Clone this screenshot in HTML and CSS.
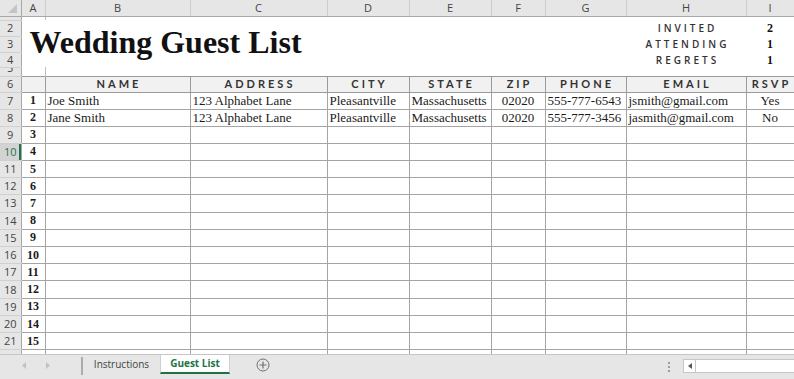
FILE: index.html
```html
<!DOCTYPE html>
<html>

<head>
    <title>Wedding Guest List</title>

    <link rel="stylesheet" href="styles.css">
</head>

<body>

    <main class="sheet">

        <div class="grid-area">
            <table class="grid">
                <colgroup>
                    <col class="col-rh">
                    <col class="col-a">
                    <col class="col-b">
                    <col class="col-c">
                    <col class="col-d">
                    <col class="col-e">
                    <col class="col-f">
                    <col class="col-g">
                    <col class="col-h">
                    <col class="col-i">
                </colgroup>

                <tr class="row-colhead">
                    <th class="corner">
                        <svg width="20" height="15" viewBox="0 0 20 15"><polygon points="17,4 17,13 8,13" fill="#c4c4c4"/></svg>
                    </th>
                    <th>A</th>
                    <th>B</th>
                    <th>C</th>
                    <th>D</th>
                    <th>E</th>
                    <th>F</th>
                    <th>G</th>
                    <th>H</th>
                    <th>I</th>
                </tr>

                <!-- title block -->
                <tr class="row-1">
                    <th class="rh"><div class="clip clip-1">1</div></th>
                    <td class="edge-a"></td>
                    <td colspan="8"></td>
                </tr>
                <tr class="row-2">
                    <th class="rh">2</th>
                    <td class="title" colspan="7" rowspan="3">Wedding Guest List</td>
                    <td class="stat-label">INVITED</td>
                    <td class="stat-value">2</td>
                </tr>
                <tr class="row-3">
                    <th class="rh">3</th>
                    <td class="stat-label">ATTENDING</td>
                    <td class="stat-value">1</td>
                </tr>
                <tr class="row-4">
                    <th class="rh">4</th>
                    <td class="stat-label">REGRETS</td>
                    <td class="stat-value">1</td>
                </tr>
                <tr class="row-5">
                    <th class="rh"><div class="clip clip-5">5</div></th>
                    <td class="edge-a"></td>
                    <td colspan="8"></td>
                </tr>

                <!-- guest table -->
                <tr class="row-head">
                    <th class="rh">6</th>
                    <td></td>
                    <td>NAME</td>
                    <td>ADDRESS</td>
                    <td>CITY</td>
                    <td>STATE</td>
                    <td>ZIP</td>
                    <td>PHONE</td>
                    <td>EMAIL</td>
                    <td>RSVP</td>
                </tr>
                <tr class="row-data">
                    <th class="rh">7</th>
                    <td class="num">1</td>
                    <td>Joe Smith</td>
                    <td>123 Alphabet Lane</td>
                    <td>Pleasantville</td>
                    <td>Massachusetts</td>
                    <td class="center">02020</td>
                    <td>555-777-6543</td>
                    <td>jsmith@gmail.com</td>
                    <td class="center">Yes</td>
                </tr>
                <tr class="row-data">
                    <th class="rh">8</th>
                    <td class="num">2</td>
                    <td>Jane Smith</td>
                    <td>123 Alphabet Lane</td>
                    <td>Pleasantville</td>
                    <td>Massachusetts</td>
                    <td class="center">02020</td>
                    <td>555-777-3456</td>
                    <td>jasmith@gmail.com</td>
                    <td class="center">No</td>
                </tr>
                <tr class="row-empty">
                    <th class="rh">9</th>
                    <td class="num">3</td>
                    <td></td><td></td><td></td><td></td><td></td><td></td><td></td><td></td>
                </tr>
                <tr class="row-empty">
                    <th class="rh rh-selected">10</th>
                    <td class="num">4</td>
                    <td></td><td></td><td></td><td></td><td></td><td></td><td></td><td></td>
                </tr>
                <tr class="row-empty">
                    <th class="rh">11</th>
                    <td class="num">5</td>
                    <td></td><td></td><td></td><td></td><td></td><td></td><td></td><td></td>
                </tr>
                <tr class="row-empty">
                    <th class="rh">12</th>
                    <td class="num">6</td>
                    <td></td><td></td><td></td><td></td><td></td><td></td><td></td><td></td>
                </tr>
                <tr class="row-empty">
                    <th class="rh">13</th>
                    <td class="num">7</td>
                    <td></td><td></td><td></td><td></td><td></td><td></td><td></td><td></td>
                </tr>
                <tr class="row-empty">
                    <th class="rh">14</th>
                    <td class="num">8</td>
                    <td></td><td></td><td></td><td></td><td></td><td></td><td></td><td></td>
                </tr>
                <tr class="row-empty">
                    <th class="rh">15</th>
                    <td class="num">9</td>
                    <td></td><td></td><td></td><td></td><td></td><td></td><td></td><td></td>
                </tr>
                <tr class="row-empty">
                    <th class="rh">16</th>
                    <td class="num">10</td>
                    <td></td><td></td><td></td><td></td><td></td><td></td><td></td><td></td>
                </tr>
                <tr class="row-empty">
                    <th class="rh">17</th>
                    <td class="num">11</td>
                    <td></td><td></td><td></td><td></td><td></td><td></td><td></td><td></td>
                </tr>
                <tr class="row-empty">
                    <th class="rh">18</th>
                    <td class="num">12</td>
                    <td></td><td></td><td></td><td></td><td></td><td></td><td></td><td></td>
                </tr>
                <tr class="row-empty">
                    <th class="rh">19</th>
                    <td class="num">13</td>
                    <td></td><td></td><td></td><td></td><td></td><td></td><td></td><td></td>
                </tr>
                <tr class="row-empty">
                    <th class="rh">20</th>
                    <td class="num">14</td>
                    <td></td><td></td><td></td><td></td><td></td><td></td><td></td><td></td>
                </tr>
                <tr class="row-empty">
                    <th class="rh">21</th>
                    <td class="num">15</td>
                    <td></td><td></td><td></td><td></td><td></td><td></td><td></td><td></td>
                </tr>
                <tr class="row-empty">
                    <th class="rh">22</th>
                    <td class="num">16</td>
                    <td></td><td></td><td></td><td></td><td></td><td></td><td></td><td></td>
                </tr>
            </table>
        </div>

        <footer class="tabbar">
            <div class="tab-nav">
                <svg width="5" height="7" viewBox="0 0 5 7"><polygon points="4,0 4,7 0,3.5" fill="#c2c2c2"/></svg>
                <svg width="5" height="7" viewBox="0 0 5 7"><polygon points="1,0 1,7 5,3.5" fill="#c2c2c2"/></svg>
            </div>
            <div class="tab-split"></div>
            <div class="tab">Instructions</div>
            <div class="tab tab-active">Guest List</div>
            <div class="tab-add">
                <svg width="14" height="14" viewBox="0 0 14 14">
                    <circle cx="7" cy="7" r="6" fill="none" stroke="#707070" stroke-width="1"/>
                    <path d="M7 3.5v7M3.5 7h7" stroke="#707070" stroke-width="1.2"/>
                </svg>
            </div>

            <div class="tab-right">
                <div class="grip">
                    <span></span><span></span><span></span>
                </div>
                <div class="hscroll">
                    <div class="hscroll-btn">
                        <svg width="4" height="6" viewBox="0 0 4 6"><polygon points="4,0 4,6 0,3" fill="#555"/></svg>
                    </div>
                </div>
            </div>
        </footer>

    </main>

</body>

</html>
```

FILE: styles.css
```css
* {
    margin: 0;
    padding: 0;
    box-sizing: border-box;
}

html,
body {
    width: 100%;
    height: 100%;
}

body {
    overflow: hidden;
    background-color: #fff;
    font-family: "Open Sans", "Noto Sans", sans-serif;
}

.sheet {
    display: flex;
    flex-direction: column;
    width: 794px;
    height: 379px;
}

.grid-area {
    height: 354px;
    overflow: hidden;
}

/* the grid */

.grid {
    width: 794px;
    table-layout: fixed;
    border-collapse: collapse;
}

.col-rh { width: 21px; }
.col-a { width: 24px; }
.col-b { width: 145px; }
.col-c { width: 137px; }
.col-d { width: 82px; }
.col-e { width: 82px; }
.col-f { width: 54px; }
.col-g { width: 81px; }
.col-h { width: 120px; }
.col-i { width: 48px; }

th,
td {
    padding: 0;
    white-space: nowrap;
    overflow: hidden;
}

.row-colhead {
    height: 16px;
}

.row-colhead th {
    background-color: #e6e6e6;
    border-right: 1px solid #cdcdcd;
    border-bottom: 1px solid #a8a8a8;
    color: #444;
    font-size: 11px;
    font-weight: normal;
    line-height: 15px;
    text-align: center;
}

.row-colhead .corner {
    border-right: 1px solid #a8a8a8;
    line-height: 0;
}

.rh {
    background-color: #e6e6e6;
    border-right: 1px solid #a8a8a8;
    border-bottom: 1px solid #d0d0d0;
    color: #444;
    font-size: 11px;
    font-weight: normal;
    line-height: 14px;
    text-align: center;
}

.rh-selected {
    background-color: #d3d3d3;
    color: #217346;
    box-shadow: inset -2px 0 0 #217346;
}

.clip {
    display: flex;
    align-items: flex-end;
    justify-content: center;
    overflow: hidden;
}

.clip-1 {
    height: 3px;
    line-height: 16px;
}

.clip-5 {
    height: 8px;
    line-height: 16px;
}

.row-1 { height: 4px; }
.row-2 { height: 16px; }
.row-3 { height: 16px; }
.row-4 { height: 14px; }
.row-5 { height: 9px; }

.edge-a {
    border-right: 1px solid #bdbdbd;
}

/* title block */

.title {
    vertical-align: top;
    padding: 6px 0 0 8px;
    font-family: "Liberation Serif", serif;
    font-size: 32px;
    font-weight: bold;
    line-height: 33px;
    color: #111;
}

.stat-label {
    text-align: center;
    padding-left: 3px;
    font-family: "Open Sans", sans-serif;
    font-size: 10px;
    font-weight: 600;
    letter-spacing: 3px;
    line-height: 14px;
    color: #333;
}

.stat-value {
    text-align: center;
    font-family: "Liberation Serif", serif;
    font-size: 12px;
    font-weight: bold;
    line-height: 14px;
    color: #111;
}

/* guest table */

.row-head {
    height: 16px;
}

.row-head td {
    background-color: #f1f1f1;
    border: 1px solid #9a9a9a;
    padding-left: 3px;
    text-align: center;
    font-family: Lato, "Open Sans", sans-serif;
    font-size: 11px;
    font-weight: bold;
    letter-spacing: 3px;
    line-height: 14px;
    color: #333;
}

.row-data {
    height: 17px;
}

.row-empty {
    height: 17.23px;
}

.row-data td,
.row-empty td {
    border: 1px solid #a4a4a4;
    padding-left: 2px;
    font-family: "Liberation Serif", serif;
    font-size: 13px;
    line-height: 15px;
    color: #1a1a1a;
}

.row-data .center,
.row-data .num,
.row-empty .num {
    text-align: center;
    padding-left: 0;
}

.num {
    font-weight: bold;
    font-size: 12px !important;
}

/* sheet tabs */

.tabbar {
    flex: 1;
    display: flex;
    align-items: flex-start;
    background-color: #e6e6e6;
    border-top: 1px solid #c6c6c6;
}

.tab-nav {
    width: 81px;
    height: 20px;
    display: flex;
    align-items: center;
    gap: 18px;
    padding-left: 22px;
}

.tab-split {
    width: 2px;
    height: 18px;
    margin-top: 2px;
    background-color: #acacac;
}

.tab {
    width: 77px;
    height: 19px;
    font-size: 10px;
    line-height: 19px;
    text-align: center;
    color: #444;
}

.tab-active {
    width: 70px;
    background-color: #fff;
    border-bottom: 2px solid #217346;
    border-left: 1px solid #cfcfcf;
    border-right: 1px solid #cfcfcf;
    line-height: 17px;
    color: #217346;
    font-weight: bold;
}

.tab-add {
    margin: 3px 0 0 26px;
    line-height: 0;
}

.tab-right {
    margin-left: auto;
    display: flex;
    align-items: flex-start;
}

.grip {
    display: flex;
    flex-direction: column;
    gap: 2px;
    margin: 7px 13px 0 0;
}

.grip span {
    width: 2px;
    height: 2px;
    background-color: #9c9c9c;
}

.hscroll {
    width: 111px;
    height: 14px;
    margin-top: 4px;
    background-color: #fff;
    border: 1px solid #c6c6c6;
    border-right: none;
}

.hscroll-btn {
    width: 12px;
    height: 12px;
    display: flex;
    align-items: center;
    justify-content: center;
    border-right: 1px solid #c6c6c6;
}
```
